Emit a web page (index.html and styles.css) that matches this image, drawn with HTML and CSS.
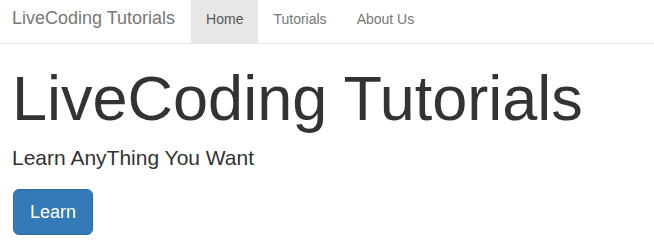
FILE: index.html
```html
<!DOCTYPE html>
<html lang="en">
<head>
<meta charset="utf-8">
<title>LiveCoding Tutorials</title>
<link rel="stylesheet" href="styles.css">
</head>
<body>
<nav class="navbar">
  <a class="brand" href="#">LiveCoding Tutorials</a>
  <ul class="nav">
    <li><a class="nav-link active" href="#">Home</a></li>
    <li><a class="nav-link" href="#">Tutorials</a></li>
    <li><a class="nav-link" href="#">About Us</a></li>
  </ul>
</nav>
<main class="hero">
  <h1 class="hero-title">LiveCoding Tutorials</h1>
  <p class="hero-lead">Learn AnyThing You Want</p>
  <a class="btn" href="#">Learn</a>
</main>
</body>
</html>
```
FILE: styles.css
```css
* { box-sizing: border-box; }
html, body {
  margin: 0;
  padding: 0;
  background: #fff;
}
body {
  font-family: "Liberation Sans", Arial, sans-serif;
  color: #333;
}
a { text-decoration: none; }

.navbar {
  display: flex;
  height: 44px;
  border-bottom: 1px solid #e7e7e7;
  background: #fff;
  padding-left: 12px;
}
.brand {
  display: block;
  font-size: 18px;
  line-height: 20px;
  padding-top: 8px;
  padding-right: 16px;
  color: #777;
}
.nav {
  display: flex;
  list-style: none;
  margin: 0;
  padding: 0;
}
.nav-link {
  display: block;
  height: 43px;
  padding: 9px 15px 0;
  font-size: 14px;
  line-height: 20px;
  color: #777;
}
.nav-link.active {
  background: #e7e7e7;
  color: #555;
}

.hero {
  padding: 0 12px;
}
.hero-title {
  margin: 20px 0 10px;
  font-size: 63px;
  font-weight: 400;
  line-height: 1.1;
  color: #333;
}
.hero-lead {
  margin: 0 0 16px;
  font-size: 21px;
  line-height: 30px;
}
.btn {
  display: inline-block;
  margin-left: 1px;
  padding: 10px 16px;
  font-size: 18px;
  line-height: 24px;
  color: #fff;
  background: #337ab7;
  border: 1px solid #2e6da4;
  border-radius: 6px;
}
```
